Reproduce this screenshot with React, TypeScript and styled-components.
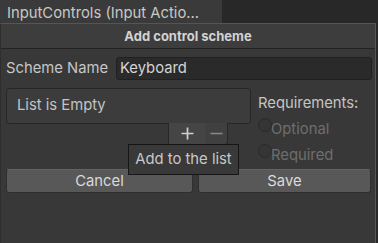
import React from "react";
import styled, { createGlobalStyle } from "styled-components";

const Global = createGlobalStyle`
  html, body { margin: 0; padding: 0; background: #282828; }
  body { font-family: Inter, "Noto Sans", "Liberation Sans", sans-serif; overflow: hidden; }
  * { box-sizing: border-box; }
`;

const Page = styled.div`
  width: 378px;
  height: 243px;
  display: flex;
  flex-direction: column;
`;

const TabBar = styled.div`
  height: 23px;
  display: flex;
  flex-shrink: 0;
`;

const Tab = styled.div`
  width: 222px;
  background: #3a3a3a;
  color: #c8c8c8;
  font-size: 14.8px;
  line-height: 26px;
  padding-left: 7px;
  white-space: nowrap;
  overflow: hidden;
`;

const Dialog = styled.div`
  width: 376px;
  flex: 1;
  background: #383838;
  border: 1px solid #555555;
  border-bottom: none;
  border-left-color: #2e2e2e;
  display: flex;
  flex-direction: column;
`;

const Header = styled.div`
  height: 25px;
  background: #3d3d3d;
  border-bottom: 1px solid #222222;
  color: #d2d2d2;
  font-size: 13px;
  font-weight: 700;
  text-align: center;
  line-height: 24px;
`;

const Body = styled.div`
  padding: 7px 3px 0 5px;
  display: flex;
  flex-direction: column;
  position: relative;
`;

const FieldRow = styled.div`
  display: flex;
  align-items: center;
  height: 24px;
`;

const Label = styled.div`
  width: 110px;
  color: #c6c6c6;
  font-size: 14.8px;
`;

const TextField = styled.div`
  flex: 1;
  height: 23px;
  background: #2a2a2a;
  border: 1px solid #212121;
  border-radius: 3px;
  color: #d4d4d4;
  font-size: 14.8px;
  line-height: 21px;
  padding-left: 3px;
`;

const Middle = styled.div`
  display: flex;
  margin-top: 8px;
  height: 72px;
`;

const ListColumn = styled.div`
  width: 245px;
  display: flex;
  flex-direction: column;
  align-items: flex-end;
`;

const ListBox = styled.div`
  width: 100%;
  height: 36px;
  background: #3c3c3c;
  border: 1px solid #272727;
  border-radius: 3px;
  color: #c4c4c4;
  font-size: 14.8px;
  line-height: 33px;
  padding-left: 10px;
`;

const ListFooter = styled.div`
  width: 60px;
  height: 22px;
  margin-right: 23px;
  margin-top: -1px;
  background: #404040;
  border: 1px solid #272727;
  border-top: none;
  border-radius: 0 0 3px 3px;
  display: flex;
`;

const FooterButton = styled.div<{ $w: number; $dim?: boolean }>`
  width: ${(p) => p.$w}px;
  display: flex;
  align-items: center;
  justify-content: center;
  background: ${(p) => (p.$dim ? "transparent" : "#454545")};
`;

const Requirements = styled.div`
  flex: 1;
  padding-left: 7px;
  padding-top: 6px;
  display: flex;
  flex-direction: column;
`;

const ReqTitle = styled.div`
  flex-shrink: 0;
  color: #c4c4c4;
  font-size: 14.8px;
  height: 22px;
  line-height: 18px;
`;

const RadioRow = styled.div`
  flex-shrink: 0;
  display: flex;
  align-items: center;
  height: 26px;
  color: #6e6e6e;
  font-size: 14.8px;
`;

const Radio = styled.div`
  width: 14px;
  height: 14px;
  border-radius: 50%;
  background: #353535;
  border: 1px solid #2a2a2a;
  margin-top: -9px;
  margin-right: -1px;
`;

const Buttons = styled.div`
  display: flex;
  gap: 5px;
  margin-top: 9px;
  padding-right: 1px;
`;

const Button = styled.div<{ $w: number }>`
  width: ${(p) => p.$w}px;
  height: 24px;
  background: #585858;
  border: 1px solid #2f2f2f;
  border-top-color: #636363;
  border-radius: 3px;
  color: #dadada;
  font-size: 14.8px;
  text-align: center;
  line-height: 22px;
`;

const Tooltip = styled.div`
  position: absolute;
  left: 127px;
  top: 95px;
  width: 111px;
  height: 31px;
  background: #393939;
  border: 1px solid #161616;
  color: #c8c8c8;
  font-size: 14.8px;
  line-height: 29px;
  text-align: center;
  white-space: nowrap;
`;

const Plus = () => (
  <svg width="13" height="13" viewBox="0 0 13 13">
    <path d="M6.5 0.5v12M0.5 6.5h12" stroke="#d0d0d0" strokeWidth="1.7" />
  </svg>
);

const Minus = () => (
  <svg width="13" height="13" viewBox="0 0 13 13">
    <path d="M0.5 6.5h12" stroke="#8a8a8a" strokeWidth="1.5" />
  </svg>
);

export default function App() {
  return (
    <Page>
      <Global />
      <TabBar>
        <Tab>InputControls (Input Actio...</Tab>
      </TabBar>
      <Dialog>
        <Header>Add control scheme</Header>
        <Body>
          <FieldRow>
            <Label>Scheme Name</Label>
            <TextField>Keyboard</TextField>
          </FieldRow>
          <Middle>
            <ListColumn>
              <ListBox>List is Empty</ListBox>
              <ListFooter>
                <FooterButton $w={36}>
                  <Plus />
                </FooterButton>
                <FooterButton $w={22} $dim>
                  <Minus />
                </FooterButton>
              </ListFooter>
            </ListColumn>
            <Requirements>
              <ReqTitle>Requirements:</ReqTitle>
              <RadioRow>
                <Radio />
                Optional
              </RadioRow>
              <RadioRow>
                <Radio />
                Required
              </RadioRow>
            </Requirements>
          </Middle>
          <Buttons>
            <Button $w={188}>Cancel</Button>
            <Button $w={174}>Save</Button>
          </Buttons>
          <Tooltip>Add to the list</Tooltip>
        </Body>
      </Dialog>
    </Page>
  );
}
